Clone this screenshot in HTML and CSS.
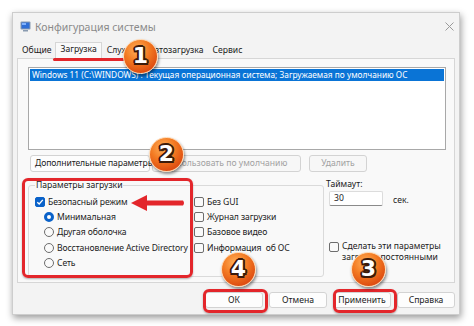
FILE: index.html
```html
<!DOCTYPE html>
<html lang="ru">
<head>
<meta charset="utf-8">
<title>Конфигурация системы</title>
<link rel="stylesheet" href="styles.css">
</head>
<body>
<div class="win">
  <div class="titlebar">
    <svg class="appicon" width="11" height="11" viewBox="0 0 11 11">
      <rect x="0.5" y="0.5" width="10" height="8" rx="1" fill="#8a9bb0"/>
      <rect x="1.5" y="1.5" width="8" height="6" fill="#2f6fd6"/>
      <rect x="2" y="2" width="4" height="2" fill="#7fb2ff"/>
      <rect x="3" y="9" width="5" height="1.5" fill="#8a9bb0"/>
    </svg>
    <span class="title">Конфигурация системы</span>
    <svg class="close" width="9" height="9" viewBox="0 0 9 9">
      <path d="M0.5 0.5 L8.5 8.5 M8.5 0.5 L0.5 8.5" stroke="#9a9a9a" stroke-width="1"/>
    </svg>
  </div>
  <div class="tabs">
    <div class="tab">Общие</div>
    <div class="tab active">Загрузка</div>
    <div class="tab">Службы</div>
    <div class="tab">Автозагрузка</div>
    <div class="tab">Сервис</div>
  </div>
  <div class="panel">
    <div class="oslist">
      <div class="osrow">Windows 11 (C:\WINDOWS) : Текущая операционная система; Загружаемая по умолчанию ОС</div>
    </div>
    <div class="btnrow">
      <div class="btn b-adv">Дополнительные параметры</div>
      <div class="btn b-def disabled">Использовать по умолчанию</div>
      <div class="btn b-del disabled">Удалить</div>
    </div>
    <div class="lower">
      <fieldset class="group">
        <legend>Параметры загрузки</legend>
        <div class="cols">
          <div class="col1">
            <div class="row"><span class="cb checked"><svg width="8" height="8" viewBox="0 0 8 8"><path d="M1.3 4.2 L3.2 6 L6.8 1.9" fill="none" stroke="#fff" stroke-width="1.3"/></svg></span>Безопасный режим</div>
            <div class="row ind"><span class="rb on"></span>Минимальная</div>
            <div class="row ind"><span class="rb"></span>Другая оболочка</div>
            <div class="row ind"><span class="rb"></span>Восстановление Active Directory</div>
            <div class="row ind"><span class="rb"></span>Сеть</div>
          </div>
          <div class="col2">
            <div class="row"><span class="cb"></span>Без GUI</div>
            <div class="row"><span class="cb"></span>Журнал загрузки</div>
            <div class="row"><span class="cb"></span>Базовое видео</div>
            <div class="row"><span class="cb"></span>Информация&nbsp; об ОС</div>
          </div>
        </div>
      </fieldset>
      <div class="side">
        <div class="tlabel">Таймаут:</div>
        <div class="trow"><div class="tinput">30</div><span class="sec">сек.</span></div>
        <div class="perm"><span class="cb"></span><span class="ptext">Сделать эти параметры<br>загрузки постоянными</span></div>
      </div>
    </div>
  </div>
  <div class="footer">
    <div class="btn fbtn">ОК</div>
    <div class="btn fbtn">Отмена</div>
    <div class="btn fbtn">Применить</div>
    <div class="btn fbtn">Справка</div>
  </div>
</div>

<div class="ann underline"></div>
<div class="ann redbox box-group"></div>
<div class="ann redbox box-ok"></div>
<div class="ann redbox box-apply"></div>
<svg class="ann arrow" width="56" height="20" viewBox="0 0 56 20">
  <path d="M1 10 L17 2 L17 7.5 L53 7.5 Q55 10 53 12.5 L17 12.5 L17 18 Z" fill="#e3262b"/>
</svg>
<div class="ann badge b1">1</div>
<div class="ann badge b2">2</div>
<div class="ann badge b3">3</div>
<div class="ann badge b4">4</div>
</body>
</html>
```

FILE: styles.css
```css
* { box-sizing: border-box; }
html, body { margin: 0; padding: 0; background: #fff; }
body {
  position: relative;
  width: 474px;
  height: 326px;
  overflow: hidden;
  font-family: "Noto Sans", "Open Sans", sans-serif;
  font-size: 8.6px;
  color: #1b1b1b;
}
.win {
  margin: 12px 0 0 12px;
  width: 448px;
  height: 303px;
  border: 1px solid #cdcdcd;
  background: #f3f3f3;
  box-shadow: 1px 3px 7px rgba(0,0,0,0.4);
  display: flex;
  flex-direction: column;
}
.titlebar {
  height: 27px;
  display: flex;
  align-items: center;
  padding-left: 7px;
  padding-right: 5px;
}
.appicon { flex: none; }
.title {
  margin-left: 4px;
  font-size: 10.5px;
  color: #8a8a8a;
  flex: 1;
}
.close { flex: none; margin-right: 0; }
.tabs {
  height: 18px;
  display: flex;
  align-items: flex-end;
  padding-left: 4px;
  font-size: 8.6px;
}
.tab {
  height: 15px;
  line-height: 14px;
  padding: 0 4px 0 5px;
  color: #1b1b1b;
}
.tab.active {
  height: 17px;
  line-height: 13px;
  padding: 0 4px;
  margin-bottom: -1px;
  background: #f9f9f9;
  border: 1px solid #d6d6d6;
  border-bottom: none;
  position: relative;
}
.panel {
  height: 225px;
  margin: 0 4px;
  border: 1px solid #d6d6d6;
  background: #f9f9f9;
  padding: 8px 8px 0 10px;
  display: flex;
  flex-direction: column;
}
.oslist {
  height: 83px;
  background: #fff;
  border: 1px solid #a8a8a8;
  padding: 1px;
}
.osrow {
  height: 12px;
  line-height: 12px;
  background: #0a74d6;
  color: #fff;
  padding-left: 2px;
  white-space: nowrap;
  font-size: 8.3px;
}
.btnrow {
  margin-top: 5px;
  display: flex;
  padding-left: 2px;
}
.btn {
  height: 17px;
  line-height: 15px;
  text-align: center;
  background: #fdfdfd;
  border: 1px solid #d3d3d3;
  border-radius: 3px;
  white-space: nowrap;
}
.btn.disabled { color: #a2a2a2; background: #f7f7f7; }
.b-adv { width: 120px; text-align: left; padding-left: 4px; letter-spacing: -0.1px; }
.b-def { width: 149px; margin-left: 2px; }
.b-del { width: 58px; margin-left: 8px; }
.lower {
  margin-top: 7px;
  display: flex;
}
.group {
  margin: 0;
  width: 296px;
  height: 98px;
  border: 1px solid #dadada;
  border-radius: 3px;
  padding: 3px 0 0 6px;
}
.group legend {
  padding: 0 1px;
  margin-left: 0;
  line-height: 12px;
}
.cols { display: flex; letter-spacing: -0.1px; }
.col1 { width: 159px; }
.row {
  height: 15.3px;
  display: flex;
  align-items: center;
  white-space: nowrap;
}
.row.ind { padding-left: 9px; }
.cb {
  flex: none;
  width: 10px;
  height: 10px;
  border: 1px solid #6d6d6d;
  border-radius: 2px;
  background: #fafafa;
  margin-right: 3px;
  display: flex;
  align-items: center;
  justify-content: center;
}
.cb.checked { background: #0a62c9; border-color: #0a62c9; }
.rb {
  flex: none;
  width: 10px;
  height: 10px;
  border: 1px solid #6d6d6d;
  border-radius: 50%;
  background: #fafafa;
  margin-right: 3px;
}
.rb.on { border: 3px solid #0a62c9; background: #fff; }
.side {
  margin-left: 2px;
  padding-top: 0;
  white-space: nowrap;
}
.tlabel { line-height: 12px; margin-top: -1px; }
.trow { display: flex; align-items: flex-end; margin-top: 1px; padding-left: 3px; }
.tinput {
  width: 54px;
  height: 15px;
  line-height: 13px;
  background: #fff;
  border: 1px solid #dcdcdc;
  border-bottom-color: #8a8a8a;
  border-radius: 2px;
  padding-left: 4px;
}
.sec { margin-left: 10px; line-height: 12px; }
.perm {
  display: flex;
  align-items: flex-start;
  margin-top: 35px;
  padding-left: 3px;
}
.perm .cb { margin-top: 1px; margin-right: 3px; }
.ptext { line-height: 10.5px; }
.footer {
  flex: 1;
  display: flex;
  justify-content: flex-end;
  gap: 6px;
  padding: 9px 4px 0 0;
}
.fbtn { width: 58px; height: 16px; line-height: 14px; }

/* annotations */
.ann { position: absolute; }
.underline {
  left: 53px; top: 58px; width: 74px; height: 3px;
  background: #e3262b; border-radius: 2px;
}
.redbox {
  border: 3px solid #e3262b;
  border-radius: 6px;
  box-shadow: 0 1px 2px rgba(0,0,0,0.3);
}
.box-group { left: 22px; top: 178px; width: 171px; height: 100px; }
.box-ok { left: 203px; top: 289px; width: 65px; height: 24px; }
.box-apply { left: 333px; top: 289px; width: 64px; height: 24px; }
.arrow { left: 130px; top: 193px; }
.badge {
  width: 35px; height: 35px;
  border-radius: 50%;
  background: radial-gradient(circle at 40% 30%, #ffb15c 0%, #f37a22 40%, #d8410d 85%, #b8330a 100%);
  border: 1.5px solid #ffd7b0;
  box-shadow: 1px 2px 3px rgba(0,0,0,0.45);
  color: #fff;
  font-family: "DejaVu Sans", sans-serif;
  font-weight: bold;
  font-size: 22px;
  line-height: 32px;
  text-align: center;
  text-shadow: -1.5px -1.5px 0 #3b1a0a, 1.5px -1.5px 0 #3b1a0a, -1.5px 1.5px 0 #3b1a0a, 1.5px 1.5px 0 #3b1a0a, 0 -2px 0 #3b1a0a, 0 2px 0 #3b1a0a, -2px 0 0 #3b1a0a, 2px 0 0 #3b1a0a;
}
.b1 { left: 123px; top: 39px; }
.b2 { left: 149px; top: 137px; }
.b3 { left: 351px; top: 252px; }
.b4 { left: 221px; top: 252px; }
```
